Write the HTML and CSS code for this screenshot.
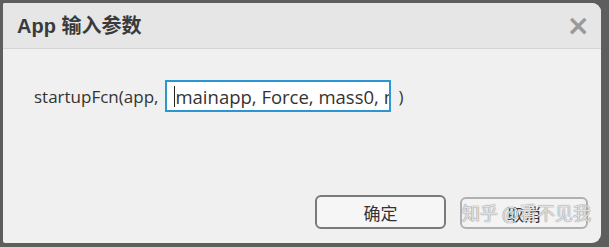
FILE: index.html
```html
<!DOCTYPE html>
<html lang="zh">

<head>
    <meta charset="UTF-8">
    <meta name="viewport" content="width=device-width, initial-scale=1.0">
    <title>App 输入参数</title>
    <link rel="stylesheet" href="styles.css">
</head>

<body>
    <div class="dialog">
        <div class="header">
            <span class="title">App 输入参数</span>
            <span class="close">&times;</span>
        </div>
        <div class="content">
            <div class="args-row">
                <span class="label">startupFcn(app,</span>
                <div class="args-box">
                    <span class="caret"></span>
                    <span class="args-text">mainapp, Force, mass0, m</span>
                </div>
                <span class="label">)</span>
            </div>
        </div>
        <div class="footer">
            <button class="btn btn-ok">确定</button>
            <button class="btn btn-cancel">取消</button>
            <span class="watermark">知乎 @看不见我</span>
        </div>
    </div>
</body>

</html>
```

FILE: styles.css
```css
* {
    margin: 0;
    padding: 0;
    box-sizing: border-box;
}

body {
    background-color: #5e5e5e;
    width: 609px;
    height: 247px;
    padding: 3px 8px 4px 3px;
    font-family: "Open Sans", "Noto Sans CJK SC", sans-serif;
}

.dialog {
    position: relative;
    display: flex;
    flex-direction: column;
    width: 598px;
    height: 240px;
    background-color: #f0f0f0;
    border-radius: 2px 9px 9px 2px;
    overflow: hidden;
}

.header {
    display: flex;
    justify-content: space-between;
    align-items: center;
    height: 46px;
    padding: 0 11px 0 14px;
    background-color: #e6e6e6;
    border-bottom: 1px solid #d4d4d4;
}

.title {
    font-family: "Liberation Sans", "Noto Sans CJK SC", sans-serif;
    font-weight: bold;
    font-size: 20px;
    color: #3a3a3a;
    padding-bottom: 2px;
}

.close {
    font-family: "DejaVu Sans", sans-serif;
    font-size: 28px;
    line-height: 28px;
    color: #9a9a9a;
    font-weight: bold;
}

.content {
    flex: 1;
    padding: 31px 0 0 31px;
}

.args-row {
    display: flex;
    align-items: center;
    gap: 7px;
}

.label {
    font-size: 17px;
    color: #333;
}

.args-box {
    display: flex;
    align-items: center;
    width: 226px;
    height: 32px;
    padding-left: 7px;
    border: 2px solid #2b97d2;
    background-color: #fff;
    overflow: hidden;
    white-space: nowrap;
}

.caret {
    flex-shrink: 0;
    width: 1px;
    height: 21px;
    background-color: #222;
}

.args-text {
    flex: 1;
    min-width: 0;
    overflow: hidden;
    font-size: 18.5px;
    color: #333;
}

.footer {
    position: relative;
    display: flex;
    justify-content: flex-end;
    gap: 14px;
    padding: 0 13px 14px 0;
}

.btn {
    width: 131px;
    height: 34px;
    font-family: "Noto Sans CJK SC", sans-serif;
    font-size: 17px;
    color: #333;
    background-color: #f6f6f6;
    border-radius: 6px;
}

.btn-ok {
    border: 2px solid #7a7a7a;
}

.btn-cancel {
    width: 128px;
    height: 32px;
    margin-top: 2px;
    border: 2px solid #b0b0b0;
    background-color: #f3f3f3;
}

.watermark {
    position: absolute;
    right: 10px;
    top: 4px;
    font-family: "Noto Sans CJK SC", sans-serif;
    font-size: 18px;
    color: rgba(255, 255, 255, 0.75);
    text-shadow: 0 0 1px #888, 0 0 1px #888;
}
```
